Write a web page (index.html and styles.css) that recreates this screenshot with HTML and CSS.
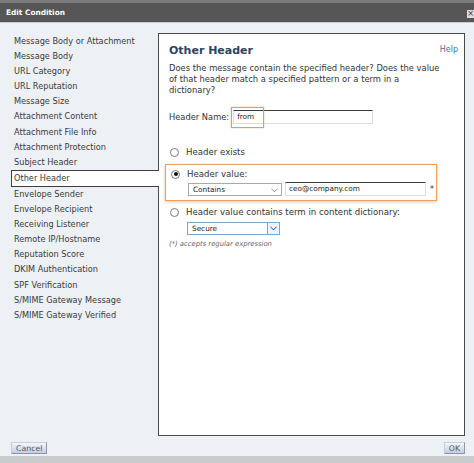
FILE: index.html
```html
<!DOCTYPE html>
<html>
<head>
<meta charset="utf-8">
<link rel="stylesheet" href="styles.css">
</head>
<body>
<div class="dialog">
  <div class="titlebar">
    <span class="title">Edit Condition</span>
    <span class="close">×</span>
  </div>
  <div class="main">
    <ul class="nav">
      <li>Message Body or Attachment</li>
      <li>Message Body</li>
      <li>URL Category</li>
      <li>URL Reputation</li>
      <li>Message Size</li>
      <li>Attachment Content</li>
      <li>Attachment File Info</li>
      <li>Attachment Protection</li>
      <li>Subject Header</li>
      <li class="selected">Other Header</li>
      <li>Envelope Sender</li>
      <li>Envelope Recipient</li>
      <li>Receiving Listener</li>
      <li>Remote IP/Hostname</li>
      <li>Reputation Score</li>
      <li>DKIM Authentication</li>
      <li>SPF Verification</li>
      <li>S/MIME Gateway Message</li>
      <li>S/MIME Gateway Verified</li>
    </ul>
    <div class="panel">
      <div class="panel-head">
        <h1 class="panel-title">Other Header</h1>
        <span class="help">Help</span>
      </div>
      <p class="desc">Does the message contain the specified header? Does the value<br>of that header match a specified pattern or a term in a<br>dictionary?</p>
      <div class="name-row">
        <span class="label">Header Name:</span>
        <span class="textbox name-box">from<span class="hl"></span></span>
      </div>
      <div class="opt opt-exists">
        <span class="radio"></span><span class="label">Header exists</span>
      </div>
      <div class="value-box">
        <div class="opt">
          <span class="radio checked"></span><span class="label">Header value:</span>
        </div>
        <div class="ctrl-row">
          <span class="select contains">Contains<svg class="chev" viewBox="0 0 8 5" width="7" height="5"><path d="M0.5 0.5 L4 4 L7.5 0.5" fill="none" stroke="#888" stroke-width="1"/></svg></span>
          <span class="textbox value-input">ceo@company.com</span>
          <span class="star">*</span>
        </div>
      </div>
      <div class="opt opt-dict">
        <span class="radio"></span><span class="label">Header value contains term in content dictionary:</span>
      </div>
      <div class="ctrl-row dict-row">
        <span class="select secure">Secure<span class="sel-btn"><svg viewBox="0 0 8 5" width="7" height="5"><path d="M0.5 0.5 L4 4 L7.5 0.5" fill="none" stroke="#3a70b0" stroke-width="1.2"/></svg></span></span>
      </div>
      <p class="note">(*) accepts regular expression</p>
    </div>
  </div>
  <div class="footer">
    <span class="btn">Cancel</span>
    <span class="btn">OK</span>
  </div>
  <div class="bottom-strip"></div>
</div>
</body>
</html>
```
FILE: styles.css
```css
html, body {
  margin: 0;
  padding: 0;
}
body {
  width: 474px;
  height: 463px;
  overflow: hidden;
  font-family: "DejaVu Sans", Verdana, sans-serif;
  color: #333;
  background: #edf1f6;
}
.dialog {
  display: flex;
  flex-direction: column;
  height: 463px;
}
.titlebar {
  height: 19px;
  border-top: 3px solid #7b7b7b;
  border-bottom: 1px solid #c9ccd0;
  background: #565656;
  display: flex;
  align-items: center;
  justify-content: space-between;
  padding: 0 0 0 6px;
}
.title {
  color: #fff;
  font-weight: bold;
  font-size: 7.4px;
}
.close {
  width: 7px;
  height: 8px;
  background: #ddd;
  color: #333;
  font-size: 8px;
  line-height: 8px;
  text-align: center;
  overflow: hidden;
  margin-top: 2px;
}
.main {
  flex: 1;
  display: flex;
  padding-top: 10px;
  min-height: 0;
}
.nav {
  list-style: none;
  margin: 1px 0 0 0;
  padding: 0;
  width: 158px;
  flex: none;
  font-size: 8.2px;
  color: #3a3a3a;
  position: relative;
  z-index: 1;
}
.nav li {
  height: 15.1px;
  line-height: 15.1px;
  padding-left: 14px;
  white-space: nowrap;
}
.nav li.selected {
  margin-left: 11px;
  margin-right: -1px;
  padding-left: 2px;
  background: #fff;
  border: 1px solid #3d3d3d;
  border-right: none;
}
.panel {
  width: 287px;
  height: 383px;
  flex: none;
  background: #fff;
  border: 1px solid #4a4a4a;
  padding: 10px 8px 8px 10px;
}
.panel-head {
  display: flex;
  justify-content: space-between;
  align-items: flex-start;
  height: 14px;
}
.panel-title {
  margin: 0;
  font-size: 11px;
  line-height: 14px;
  font-weight: bold;
  color: #2c4560;
}
.help {
  font-size: 8px;
  color: #4a7294;
  line-height: 10px;
  margin-top: 1px;
  margin-right: -2px;
}
.desc {
  margin: 5px 0 0 0;
  font-size: 8.4px;
  line-height: 11px;
  color: #333;
  white-space: nowrap;
}
.name-row {
  display: flex;
  align-items: center;
  margin-top: 13px;
  height: 16px;
  font-size: 8.3px;
}
.name-row .label {
  margin-right: 4px;
}
.textbox {
  display: inline-block;
  background: #fff;
  border: 1px solid #ddd;
  border-top: 1px solid #3a3a3a;
  box-sizing: border-box;
  font-size: 7.3px;
  color: #222;
  padding-left: 3px;
}
.name-box {
  position: relative;
  width: 140px;
  height: 14px;
  line-height: 12px;
}
.hl {
  position: absolute;
  left: -3px;
  top: -4px;
  width: 31px;
  height: 19px;
  border: 1px solid #e59a55;
  box-shadow: 0 0 2px rgba(230, 150, 80, 0.5);
}
.opt {
  display: flex;
  align-items: center;
  font-size: 8.6px;
  height: 12px;
}
.opt .label {
  margin-left: 7px;
}
.opt-exists {
  margin-top: 21px;
  padding-left: 1px;
}
.radio {
  width: 9px;
  height: 9px;
  border: 1px solid #7a7a7a;
  border-radius: 50%;
  box-sizing: border-box;
  background: #fff;
  position: relative;
  flex: none;
}
.radio.checked::after {
  content: "";
  position: absolute;
  left: 1.5px;
  top: 1.5px;
  width: 4px;
  height: 4px;
  border-radius: 50%;
  background: #111;
}
.value-box {
  margin: 6px 19px 0 -4px;
  border: 1px solid #ef9f58;
  box-shadow: 0 1px 3px rgba(200, 160, 120, 0.6);
  padding: 3px 0 5px 5px;
  height: 27px;
}
.ctrl-row {
  display: flex;
  align-items: center;
  margin-top: 2px;
  padding-left: 17px;
}
.select {
  position: relative;
  display: flex;
  align-items: center;
  box-sizing: border-box;
  height: 13px;
  border: 1px solid #a9a9a9;
  background: #fff;
  font-size: 7.3px;
  color: #222;
  padding-left: 4px;
}
.contains {
  width: 94px;
}
.chev {
  position: absolute;
  right: 3px;
  top: 4px;
}
.value-input {
  width: 141px;
  height: 14px;
  line-height: 12px;
  margin-left: 3px;
}
.star {
  font-size: 8px;
  margin-left: 4px;
  color: #333;
}
.opt-dict {
  margin-top: 5px;
  padding-left: 1px;
}
.dict-row {
  margin-top: 4px;
  padding-left: 18px;
}
.secure {
  width: 93px;
  border-color: #7ea4cc;
}
.sel-btn {
  position: absolute;
  right: 0;
  top: 0;
  bottom: 0;
  width: 11px;
  border-left: 1px solid #7ea4cc;
  background: #eef4fb;
  display: flex;
  align-items: center;
  justify-content: center;
}
.note {
  margin: 5px 0 0 0;
  font-size: 6.8px;
  font-style: italic;
  color: #666;
}
.footer {
  height: 20px;
  display: flex;
  justify-content: space-between;
  align-items: flex-start;
  padding: 6px 9px 0 11px;
  box-sizing: border-box;
}
.btn {
  display: inline-block;
  height: 12px;
  line-height: 11px;
  box-sizing: border-box;
  padding: 0 4px;
  font-size: 7.8px;
  color: #555;
  background: linear-gradient(#f4f6fa, #c4cde0);
  border: 1px solid #c8cfdc;
  border-right-color: #8c96aa;
  border-bottom-color: #8c96aa;
}
.bottom-strip {
  height: 7px;
  background: #c9cbcd;
  flex: none;
}
```
